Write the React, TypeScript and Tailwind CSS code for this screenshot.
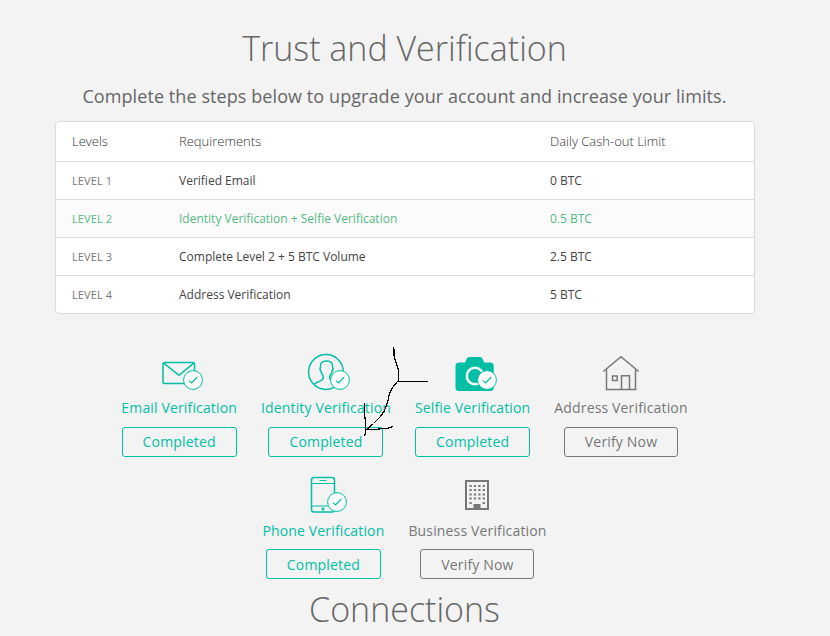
import type { ReactNode } from "react";

interface Level {
  name: string;
  requirement: string;
  limit: string;
  current?: boolean;
}

interface Step {
  label: string;
  completed: boolean;
  icon: ReactNode;
}

const levels: Level[] = [
  { name: "LEVEL 1", requirement: "Verified Email", limit: "0 BTC" },
  {
    name: "LEVEL 2",
    requirement: "Identity Verification + Selfie Verification",
    limit: "0.5 BTC",
    current: true,
  },
  { name: "LEVEL 3", requirement: "Complete Level 2 + 5 BTC Volume", limit: "2.5 BTC" },
  { name: "LEVEL 4", requirement: "Address Verification", limit: "5 BTC" },
];

function CheckBadge() {
  return (
    <>
      <circle cx="38" cy="28" r="9.4" fill="#fff" strokeWidth="1" />
      <path d="M33.8 28.6l2.8 2.4 5.6-6" strokeWidth="1.1" />
    </>
  );
}

const firstRow: Step[] = [
  {
    label: "Email Verification",
    completed: true,
    icon: (
      <>
        <rect x="8" y="10.5" width="31.5" height="21" rx="1.8" />
        <path d="M8.8 11.2L24 23.3 38.7 11.2" />
        <CheckBadge />
      </>
    ),
  },
  {
    label: "Identity Verification",
    completed: true,
    icon: (
      <>
        <circle cx="24" cy="20" r="17.4" />
        <path d="M12 32.5c3-3.500 8.500-3 9.200-6 .2-1.200.1-2.400-.4-3.500-1-.8-1.700-2.400-1.900-4.200-1-.8-1-2.300-.5-3.300-.6-4.700 2-6.500 6.100-6.500s6.700 1.800 6.100 6.500c.5 1 .5 2.500-.5 3.300-.2 1.800-.9 3.400-1.900 4.200-.5 1.100-.6 2.300-.4 3.500.7 3 6.200 2.500 9.200 6" />
        <CheckBadge />
      </>
    ),
  },
  {
    label: "Selfie Verification",
    completed: true,
    icon: (
      <>
        <path
          d="M10 10.5h6l1.8-4q.7-1.5 2.3-1.5h11q1.6 0 2.3 1.5l1.8 4h6q3.5 0 3.5 3.5v21.5q0 3.5-3.5 3.5h-31.2q-3.5 0-3.5-3.5v-21.5q0-3.5 3.5-3.5z"
          fill="currentColor"
          stroke="none"
        />
        <circle cx="26" cy="24" r="8.2" stroke="#f3f3f3" strokeWidth="2.6" />
        <CheckBadge />
      </>
    ),
  },
  {
    label: "Address Verification",
    completed: false,
    icon: (
      <>
        <path d="M6.3 19.5L24 4.7 41.7 19.5" />
        <path d="M9.5 17.5V37.5H38.5V17.5" />
        <rect x="15.5" y="24" width="4.7" height="4.5" />
        <path d="M24.5 37.5V23.7h8V37.5" />
      </>
    ),
  },
];

const secondRow: Step[] = [
  {
    label: "Phone Verification",
    completed: true,
    icon: (
      <>
        <rect x="12.5" y="3.5" width="23" height="34.5" rx="2.5" />
        <path d="M12.5 9.5h23M12.5 32h23M20.5 6.5h7" strokeWidth="1.2" />
        <circle cx="24" cy="35" r="1.5" fill="currentColor" stroke="none" />
        <CheckBadge />
      </>
    ),
  },
  {
    label: "Business Verification",
    completed: false,
    icon: (
      <>
        <rect x="13" y="7" width="22" height="28" strokeWidth="2" />
        <path d="M20.5 30h7v5h-7z" fill="currentColor" stroke="none" />
        <path
          d="M16.5 12h15.5M16.5 16h15.5M16.5 20.5h15.5M16.5 24.5h15.5"
          strokeWidth="2"
          strokeDasharray="2.2 2.2"
        />
        <path d="M16.5 29h2.2M29.7 29h2.2" strokeWidth="2" />
      </>
    ),
  },
];

function StepCard({ step, low }: Readonly<{ step: Step; low?: boolean }>) {
  return (
    <div
      className={`flex flex-col items-center ${
        step.completed ? "text-[#00bfa5]" : "text-[#777777]"
      }`}
    >
      <svg
        width="48"
        height="42"
        viewBox="0 0 48 42"
        fill="none"
        stroke="currentColor"
        strokeWidth="1.5"
      >
        {step.icon}
      </svg>
      <p
        className={`text-[14px] leading-5 tracking-[0.15px] whitespace-nowrap ${
          low ? "mt-[5px] mb-2" : "mt-1 mb-[9px]"
        }`}
      >
        {step.label}
      </p>
      <button
        className={`h-[30px] rounded-[3px] border border-current text-[14px] leading-none tracking-[0.17px] ${
          step.completed ? "w-[115px]" : "w-[114px]"
        } ${low ? "pt-0.5" : ""}`}
      >
        {step.completed ? "Completed" : "Verify Now"}
      </button>
    </div>
  );
}

// hand-drawn pointer lying over the steps
function Scribble() {
  return (
    <svg
      className="pointer-events-none absolute top-[345px] left-[360px]"
      width="72"
      height="94"
      viewBox="360 345 72 94"
      fill="none"
      stroke="#000"
      strokeWidth="1.2"
      shapeRendering="crispEdges"
    >
      <path d="M393.5 347v7l2 7 3 9v11M397 381.5h31" />
      <path d="M394.5 349v6" />
      <path d="M397.5 381.5l-5 6-3 6-2 9-3 8-4 6-7 7-7 6" />
      <path d="M364.5 403v11l1 8v8v3l-1 3M366 429.5h10l6-1h5l6-2" />
    </svg>
  );
}

export default function App() {
  return (
    <div className="relative h-[636px] overflow-hidden bg-[#f3f3f3] font-['Open_Sans',sans-serif] text-[#666666]">
      <main className="flex w-[809px] flex-col items-center">
        <h1 className="mt-[23px] text-[34px] leading-[50px] font-light">
          Trust and Verification
        </h1>
        <p className="mt-[9px] text-[18px] leading-7 tracking-[0.08px]">
          Complete the steps below to upgrade your account and increase your limits.
        </p>
        <div className="mt-[11px] ml-px w-[700px] overflow-hidden rounded-[4px] border border-[#dadcdc] bg-white text-[12px]">
          <div className="flex h-[39px] items-center px-4 text-[13px] font-light text-[#333333]">
            <span className="w-[107px]">Levels</span>
            <span className="w-[371px]">Requirements</span>
            <span>Daily Cash-out Limit</span>
          </div>
          {levels.map((level) => (
            <div
              key={level.name}
              className={`flex h-[38px] items-center border-t border-[#dadcdc] px-4 ${
                level.current ? "bg-[#fbfbfb] text-[#55b983]" : "text-[#444444]"
              }`}
            >
              <span
                className={`w-[107px] pt-0.5 text-[11px] tracking-[0.1px] ${
                  level.current ? "" : "text-[#777777]"
                }`}
              >
                {level.name}
              </span>
              <span className="w-[371px]">{level.requirement}</span>
              <span>{level.limit}</span>
            </div>
          ))}
        </div>
        <section className="mt-[38px] flex flex-col gap-[17px]">
          <div className="flex justify-center gap-6">
            {firstRow.map((step) => (
              <StepCard key={step.label} step={step} />
            ))}
          </div>
          <div className="flex justify-center gap-6">
            {secondRow.map((step) => (
              <StepCard key={step.label} step={step} low />
            ))}
          </div>
        </section>
        <h1 className="mt-[5px] text-[34px] leading-[50px] font-light">Connections</h1>
      </main>
      <Scribble />
    </div>
  );
}
